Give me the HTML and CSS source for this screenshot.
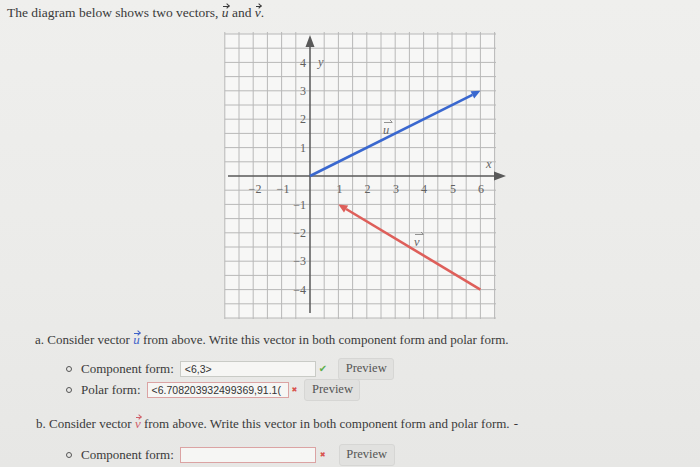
FILE: index.html
```html
<!DOCTYPE html>
<html lang="en">
<head>
<meta charset="utf-8">
<title>Vectors</title>
<link rel="stylesheet" href="styles.css">
</head>
<body>
<p class="intro">The diagram below shows two vectors, <span class="vec">u</span> and <span class="vec">v</span>.</p>

<div class="figure">
<svg class="plane" width="300" height="292" viewBox="0 0 300 292" xmlns="http://www.w3.org/2000/svg">
  <rect x="9.8" y="6" width="269.8" height="284" fill="#f7f7f6"/>
  <path class="grid" d="M9.8 4V291M24 4V291M38.2 4V291M52.4 4V291M66.6 4V291M80.8 4V291M109.2 4V291M123.4 4V291M137.6 4V291M151.8 4V291M166 4V291M180.2 4V291M194.4 4V291M208.6 4V291M222.8 4V291M237 4V291M251.2 4V291M265.4 4V291M279.6 4V291
  M9.8 6H281M9.8 20.2H281M9.8 34.4H281M9.8 48.6H281M9.8 62.8H281M9.8 77H281M9.8 91.2H281M9.8 105.4H281M9.8 119.6H281M9.8 133.8H281M9.8 162.2H281M9.8 176.4H281M9.8 190.6H281M9.8 204.8H281M9.8 219H281M9.8 233.2H281M9.8 247.4H281M9.8 261.6H281M9.8 275.8H281M9.8 290H281"/>
  <path class="axis" d="M13 148H281M95 17V285"/>
  <path class="axis-head" d="M291 148L279 143.5L279 152.5ZM95 7L90.5 19L99.5 19Z"/>

  <g class="ticks">
    <text x="91" y="38.6">4</text>
    <text x="91" y="67">3</text>
    <text x="91" y="95.4">2</text>
    <text x="91" y="123.8">1</text>
    <text x="91" y="180.6">−1</text>
    <text x="91" y="209">−2</text>
    <text x="91" y="237.4">−3</text>
    <text x="91" y="265.8">−4</text>
  </g>
  <g class="ticks xt">
    <text x="40" y="164.5">−2</text>
    <text x="68" y="164.5">−1</text>
    <text x="124.5" y="164.5">1</text>
    <text x="152.5" y="164.5">2</text>
    <text x="181" y="164.5">3</text>
    <text x="209" y="164.5">4</text>
    <text x="238" y="164.5">5</text>
    <text x="266" y="164.5">6</text>
  </g>
  <text class="var" x="103" y="38">y</text>
  <text class="var" x="271" y="140">x</text>

  <path class="vec-u" d="M95 148L257.4 66.8"/>
  <path class="head-u" d="M265.4 62.8L259.2 70.4L255.6 63.2Z"/>
  <path class="vec-v" d="M265.4 261.6L131.1 181"/>
  <path class="head-v" d="M123.4 176.4L133.2 177.6L129 184.4Z"/>

  <text class="var" x="168" y="106">u</text>
  <path class="harp" d="M169 94.5H177M175 92L177.5 94.5"/>
  <text class="var" x="199" y="218">v</text>
  <path class="harp" d="M200 206.5H208M206 204L208.5 206.5"/>
</svg>
</div>

<section class="part part-a">
  <p class="prompt">a. Consider vector <span class="vec blue">u</span> from above. Write this vector in both component form and polar form.</p>
  <ul class="answers">
    <li class="answer">
      <span class="label">Component form:</span>
      <span class="field ok w-comp">&lt;6,3&gt;</span>
      <span class="mark check">✔</span>
      <span class="preview">Preview</span>
    </li>
    <li class="answer">
      <span class="label">Polar form:</span>
      <span class="field bad w-polar">&lt;6.708203932499369,91.1(</span>
      <span class="mark cross">✖</span>
      <span class="preview">Preview</span>
    </li>
  </ul>
</section>

<section class="part part-b">
  <p class="prompt">b. Consider vector <span class="vec red">v</span> from above. Write this vector in both component form and polar form.<span class="dash">-</span></p>
  <ul class="answers">
    <li class="answer">
      <span class="label">Component form:</span>
      <span class="field bad w-comp"></span>
      <span class="mark cross">✖</span>
      <span class="preview">Preview</span>
    </li>
  </ul>
</section>
</body>
</html>
```

FILE: styles.css
```css
html, body {
  margin: 0;
  padding: 0;
}
body {
  background: linear-gradient(180deg, #efefed 0%, #ebebe9 60%, #e7e7e5 100%);
  color: #3a3a3a;
  font-family: "Liberation Serif", "DejaVu Serif", serif;
  font-size: 13px;
  width: 700px;
  height: 467px;
  overflow: hidden;
}
.intro {
  margin: 0;
  padding: 5px 0 0 7px;
  line-height: 16px;
  font-size: 13.5px;
}
.vec {
  position: relative;
  font-style: italic;
}
.vec::after {
  content: "";
  position: absolute;
  left: 1px;
  right: 0;
  top: 1px;
  height: 0;
  border-top: 1px solid currentColor;
}
.vec::before {
  content: "";
  position: absolute;
  right: 0;
  top: -1px;
  width: 3px;
  height: 3px;
  border-right: 1px solid currentColor;
  border-top: 1px solid currentColor;
  transform: rotate(45deg);
  transform-origin: center;
}
.vec.blue { color: #3f62c8; }
.vec.red { color: #d0606a; }

.figure {
  margin: 7px 0 0 215px;
}
.plane {
  display: block;
}
.grid {
  fill: none;
  stroke: #b8b8b8;
  stroke-width: 1;
}
.axis {
  fill: none;
  stroke: #595959;
  stroke-width: 1.5;
}
.axis-head { fill: #595959; }
.ticks text {
  font-family: "Liberation Serif", serif;
  font-size: 12px;
  fill: #606060;
  text-anchor: end;
}
.ticks.xt text { text-anchor: middle; }
.var {
  font-family: "Liberation Serif", serif;
  font-style: italic;
  font-size: 12.5px;
  fill: #666;
}
.harp {
  fill: none;
  stroke: #777;
  stroke-width: 0.8;
}
.vec-u {
  stroke: #3a68cf;
  stroke-width: 2.6;
  fill: none;
}
.head-u { fill: #3a68cf; }
.vec-v {
  stroke: #de5f5a;
  stroke-width: 2.6;
  fill: none;
}
.head-v { fill: #de5f5a; }

.part { margin: 0; }
.prompt {
  margin: 0;
  line-height: 16px;
}
.part-a .prompt { padding: 12px 0 0 35px; }
.part-b .prompt { padding: 16px 0 0 36px; }
.dash { margin-left: 4px; }

.answers {
  list-style: none;
  margin: 0;
  padding: 0;
}
.part-a .answers { padding-top: 10px; }
.part-b .answers { padding-top: 12px; }
.answer {
  display: flex;
  align-items: center;
  height: 21px;
  padding-left: 66px;
}
.answer::before {
  content: "";
  width: 4px;
  height: 4px;
  border: 1px solid #555;
  border-radius: 50%;
  margin-right: 9px;
}
.label {
  margin-right: 6px;
}
.field {
  box-sizing: border-box;
  height: 16px;
  background: #f6f6f4;
  border: 1px solid #c9cbc6;
  font-family: "Liberation Sans", Arial, sans-serif;
  font-size: 10.5px;
  line-height: 14px;
  padding-left: 4px;
  color: #333;
  overflow: hidden;
  white-space: nowrap;
}
.field.bad { border-color: #dba3a3; }
.w-comp { width: 136px; }
.w-polar { width: 142px; }
.mark {
  font-family: "DejaVu Sans", sans-serif;
}
.check {
  color: #5cae4a;
  font-size: 10px;
  margin: 0 11px 0 3px;
}
.cross {
  color: #d9534f;
  font-size: 7px;
  margin: 0 7px 0 3px;
}
.part-b .cross { margin: 0 13px 0 4px; }
.preview {
  box-sizing: border-box;
  width: 56px;
  height: 22px;
  display: flex;
  align-items: center;
  justify-content: center;
  background: #e1e1df;
  border: 1px solid #d6d6d4;
  border-radius: 3px;
  color: #555;
  font-size: 12.5px;
}
```
